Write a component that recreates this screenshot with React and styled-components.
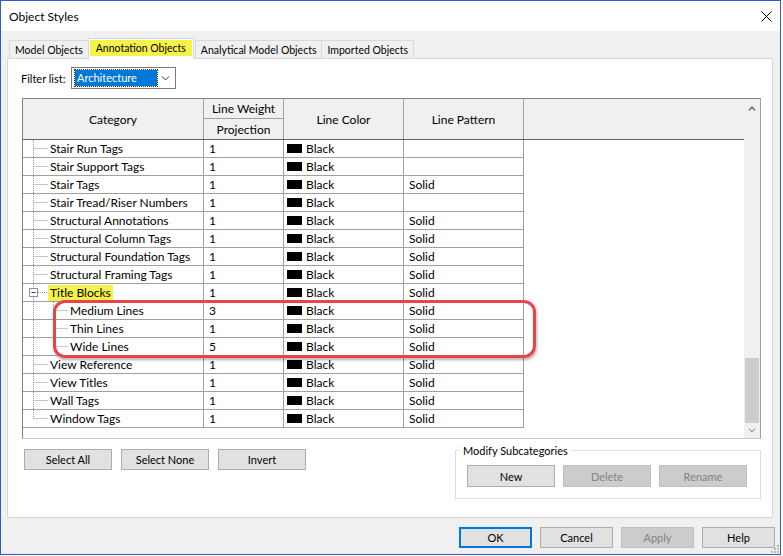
import React from "react";
import styled, { createGlobalStyle } from "styled-components";

const FONT = `"Lato", "Noto Sans", "Liberation Sans", sans-serif`;

const rows = [
  { name: "Stair Run Tags", weight: "1", pattern: "" },
  { name: "Stair Support Tags", weight: "1", pattern: "" },
  { name: "Stair Tags", weight: "1", pattern: "Solid" },
  { name: "Stair Tread/Riser Numbers", weight: "1", pattern: "" },
  { name: "Structural Annotations", weight: "1", pattern: "Solid" },
  { name: "Structural Column Tags", weight: "1", pattern: "Solid" },
  { name: "Structural Foundation Tags", weight: "1", pattern: "Solid" },
  { name: "Structural Framing Tags", weight: "1", pattern: "Solid" },
  { name: "Title Blocks", weight: "1", pattern: "Solid", expander: true, marked: true },
  { name: "Medium Lines", weight: "3", pattern: "Solid", level: 1 },
  { name: "Thin Lines", weight: "1", pattern: "Solid", level: 1 },
  { name: "Wide Lines", weight: "5", pattern: "Solid", level: 1, last: true },
  { name: "View Reference", weight: "1", pattern: "Solid" },
  { name: "View Titles", weight: "1", pattern: "Solid" },
  { name: "Wall Tags", weight: "1", pattern: "Solid" },
  { name: "Window Tags", weight: "1", pattern: "Solid", last: true },
];

const GlobalStyle = createGlobalStyle`
  * { box-sizing: border-box; }
  html, body { margin: 0; background: #fff; }
  body { font-family: ${FONT}; font-size: 12px; color: #000; }
`;

const Window = styled.div`
  position: relative;
  width: 781px;
  height: 555px;
  border: 1px solid #2f5bc9;
  background: #f0f0f0;
  display: flex;
  flex-direction: column;
`;

const TitleBar = styled.header`
  height: 30px;
  background: #fff;
  display: flex;
  align-items: center;
  justify-content: space-between;
  padding: 0 8px 0 8px;
  font-size: 12px;
`;

const TabStrip = styled.div`
  height: 27px;
  display: flex;
  align-items: flex-end;
  padding-left: 9px;
  font-size: 10.5px;
`;

const Tab = styled.div`
  position: relative;
  z-index: ${(p) => (p.$active ? 2 : 1)};
  height: ${(p) => (p.$active ? 21 : 18)}px;
  margin-bottom: ${(p) => (p.$active ? -1 : 0)}px;
  margin-left: -1px;
  margin-right: ${(p) => (p.$active ? 2 : 0)}px;
  padding: ${(p) => (p.$active ? "1px 1px 3px" : "0 5px")};
  display: flex;
  align-items: center;
  background: ${(p) => (p.$active ? "#fff" : "#f0f0f0")};
  border: 1px solid #d9d9d9;
  border-bottom: none;
  white-space: nowrap;
`;

const TabLabel = styled.span`
  display: flex;
  align-items: center;
  height: 100%;
  padding: 0 6px;
  background: ${(p) => (p.$marked ? "#f7f24a" : "transparent")};
`;

const Panel = styled.section`
  height: 460px;
  margin: 0 7px 0 6px;
  background: #fff;
  border: 1px solid #d9d9d9;
  padding: 8px 11px 0 14px;
  display: flex;
  flex-direction: column;
`;

const FilterRow = styled.div`
  display: flex;
  align-items: center;
  height: 22px;
  font-size: 11px;
`;

const FilterLabel = styled.label`
  width: 50px;
  margin-left: -1px;
`;

const Combo = styled.div`
  width: 105px;
  height: 22px;
  border: 1px solid #7a7a7a;
  background: #fff;
  display: flex;
  align-items: center;
  justify-content: space-between;
  padding: 0 5px 0 3px;
`;

const ComboValue = styled.span`
  width: 82px;
  height: 16px;
  line-height: 16px;
  padding: 0 2px;
  background: #0078d7;
  color: #fff;
  outline: 1px dotted #333;
  outline-offset: 0;
`;

const Frame = styled.div`
  position: relative;
  margin-top: 9px;
  height: 341px;
  border: 1px solid #828282;
  border-right-color: #a0a0a0;
  border-bottom-color: #c8c8c8;
  background: #fff;
  display: flex;
`;

const GridArea = styled.div`
  flex: 1;
  display: flex;
  flex-direction: column;
`;

const Header = styled.div`
  display: grid;
  grid-template-columns: 181px 80px 120px 120px 1fr;
  grid-template-rows: 20px 20px;
  background: #f0f0f0;
  border-bottom: 1px solid #646464;
`;

const HeadCell = styled.div`
  grid-row: ${(p) => (p.$span ? "1 / span 2" : "auto")};
  display: flex;
  align-items: center;
  justify-content: center;
  border-right: ${(p) => (p.$filler ? "none" : "1px solid #a0a0a0")};
  border-bottom: ${(p) => (p.$split ? "1px solid #a0a0a0" : "none")};
  font-size: 12px;
`;

const Row = styled.div`
  display: grid;
  grid-template-columns: 181px 80px 120px 120px;
  height: 18px;
`;

const Cell = styled.div`
  display: flex;
  align-items: center;
  gap: ${(p) => p.$gap ?? 4}px;
  padding-left: ${(p) => p.$pad ?? 5}px;
  border-right: 1px solid #a0a0a0;
  border-bottom: 1px solid #a0a0a0;
  white-space: nowrap;
  overflow: hidden;
  font-size: 12px;
`;

const CatText = styled.span`
  padding: 0 2px;
  margin-left: -2px;
  line-height: 16px;
  background: ${(p) => (p.$marked ? "#f7f24a" : "transparent")};
`;

const Swatch = styled.span`
  width: 15px;
  height: 9px;
  background: #000;
`;

const Scrollbar = styled.div`
  width: 16px;
  background: #f0f0f0;
  display: flex;
  flex-direction: column;
`;

const ScrollArrow = styled.div`
  height: ${(p) => p.$h}px;
  display: flex;
  align-items: center;
  justify-content: center;
`;

const Track = styled.div`
  flex: 1;
  display: flex;
  flex-direction: column;
  justify-content: flex-end;
  padding: 0 1px;
`;

const Thumb = styled.div`
  height: 65px;
  background: #cdcdcd;
`;

const Highlight = styled.div`
  position: absolute;
  left: 30px;
  top: 201px;
  width: 483px;
  height: 58px;
  border: 3px solid #e8454b;
  border-radius: 12px;
  box-shadow: 1px 2px 3px rgba(0, 0, 0, 0.3);
  pointer-events: none;
`;

const BottomRow = styled.div`
  display: flex;
  justify-content: space-between;
  align-items: flex-start;
`;

const ButtonGroup = styled.div`
  display: flex;
  gap: 9px;
  margin-top: 10px;
  padding-left: 2px;
`;

const Button = styled.button`
  width: ${(p) => p.$w || 88}px;
  height: ${(p) => p.$h || 21}px;
  padding: 0;
  font-family: ${FONT};
  font-size: 11px;
  color: ${(p) => (p.disabled ? "#838383" : "#000")};
  background: ${(p) => (p.disabled ? "#cccccc" : "#e1e1e1")};
  border: 1px solid ${(p) => (p.$default ? "#0078d7" : p.disabled ? "#bfbfbf" : "#adadad")};
  box-shadow: ${(p) => (p.$default ? "inset 0 0 0 1px #0078d7" : "none")};
`;

const Group = styled.fieldset`
  width: 306px;
  margin: 5px 0 0;
  padding: 8px 13px 11px 11px;
  border: 1px solid #dcdcdc;
  display: flex;
  gap: 8px;
`;

const Legend = styled.legend`
  margin-left: -7px;
  padding: 0 3px;
  font-size: 11px;
`;

const Footer = styled.footer`
  display: flex;
  justify-content: flex-end;
  gap: 8px;
  padding: 9px 5px 0 0;
`;

const Grip = styled.svg`
  position: absolute;
  right: 1px;
  bottom: 1px;
`;

function TreeGuide({ level = 0, last, expander }) {
  const w = level ? 47 : 27;
  const dot = { stroke: "#909090", strokeWidth: 1, strokeDasharray: "1 1" };
  const x0 = 10.5;
  const x1 = 30.5;
  return (
    <svg width={w} height="17" viewBox={`0 0 ${w} 17`}>
      {expander ? (
        <>
          <line x1={x0} y1="0" x2={x0} y2="4" {...dot} />
          <line x1={x0} y1="13" x2={x0} y2="17" {...dot} />
          <rect x="6.5" y="4.5" width="8" height="8" fill="#fff" stroke="#919191" />
          <line x1="8.5" y1="8.5" x2="12.5" y2="8.5" stroke="#333" />
          <line x1="15" y1="8.5" x2="25" y2="8.5" {...dot} />
        </>
      ) : level ? (
        <>
          <line x1={x0} y1="0" x2={x0} y2="17" {...dot} />
          <line x1={x1} y1="0" x2={x1} y2={last ? 8.5 : 17} {...dot} />
          <line x1={x1} y1="8.5" x2="45" y2="8.5" {...dot} />
        </>
      ) : (
        <>
          <line x1={x0} y1="0" x2={x0} y2={last ? 8.5 : 17} {...dot} />
          <line x1={x0} y1="8.5" x2="25" y2="8.5" {...dot} />
        </>
      )}
    </svg>
  );
}

const Chevron = ({ up, w = 9, color = "#606060" }) => (
  <svg width={w} height="5" viewBox="0 0 9 5">
    <polyline
      points={up ? "1,4.5 4.5,1 8,4.5" : "1,0.5 4.5,4 8,0.5"}
      fill="none"
      stroke={color}
      strokeWidth={up ? 1.6 : 1}
    />
  </svg>
);

export default function App() {
  return (
    <>
      <GlobalStyle />
      <Window>
        <TitleBar>
          <span>Object Styles</span>
          <svg width="11" height="11" viewBox="0 0 11 11">
            <path d="M0.5 0.5 L10.5 10.5 M10.5 0.5 L0.5 10.5" stroke="#000" strokeWidth="1" />
          </svg>
        </TitleBar>

        <TabStrip>
          <Tab>Model Objects</Tab>
          <Tab $active>
            <TabLabel $marked>Annotation Objects</TabLabel>
          </Tab>
          <Tab>Analytical Model Objects</Tab>
          <Tab>Imported Objects</Tab>
        </TabStrip>

        <Panel>
          <FilterRow>
            <FilterLabel>Filter list:</FilterLabel>
            <Combo>
              <ComboValue>Architecture</ComboValue>
              <Chevron color="#333" />
            </Combo>
          </FilterRow>

          <Frame>
            <GridArea>
              <Header>
                <HeadCell $span>Category</HeadCell>
                <HeadCell $split>Line Weight</HeadCell>
                <HeadCell $span>Line Color</HeadCell>
                <HeadCell $span>Line Pattern</HeadCell>
                <HeadCell $span $filler />
                <HeadCell style={{ gridColumn: 2, gridRow: 2 }}>Projection</HeadCell>
              </Header>
              {rows.map((r) => (
                <Row key={r.name}>
                  <Cell $pad={0} $gap={0}>
                    <TreeGuide level={r.level} last={r.last} expander={r.expander} />
                    <CatText $marked={r.marked}>{r.name}</CatText>
                  </Cell>
                  <Cell>{r.weight}</Cell>
                  <Cell $pad={3}>
                    <Swatch />
                    Black
                  </Cell>
                  <Cell>{r.pattern}</Cell>
                </Row>
              ))}
            </GridArea>
            <Scrollbar>
              <ScrollArrow $h={18}>
                <Chevron up w={8} />
              </ScrollArrow>
              <Track>
                <Thumb />
              </Track>
              <ScrollArrow $h={15}>
                <Chevron w={8} />
              </ScrollArrow>
            </Scrollbar>
            <Highlight />
          </Frame>

          <BottomRow>
            <ButtonGroup>
              <Button>Select All</Button>
              <Button>Select None</Button>
              <Button>Invert</Button>
            </ButtonGroup>
            <Group>
              <Legend>Modify Subcategories</Legend>
              <Button $h={22}>New</Button>
              <Button $h={22} disabled>
                Delete
              </Button>
              <Button $h={22} disabled>
                Rename
              </Button>
            </Group>
          </BottomRow>
        </Panel>

        <Footer>
          <Button $w={73} $h={21} $default>
            OK
          </Button>
          <Button $w={73} $h={21}>
            Cancel
          </Button>
          <Button $w={73} $h={21} disabled>
            Apply
          </Button>
          <Button $w={73} $h={21}>
            Help
          </Button>
        </Footer>

        <Grip width="8" height="8" viewBox="0 0 8 8">
          {[
            [6, 0],
            [6, 3],
            [3, 3],
            [6, 6],
            [3, 6],
            [0, 6],
          ].map(([x, y]) => (
            <rect key={`${x}-${y}`} x={x} y={y} width="2" height="2" fill="#b8b8b8" />
          ))}
        </Grip>
      </Window>
    </>
  );
}
